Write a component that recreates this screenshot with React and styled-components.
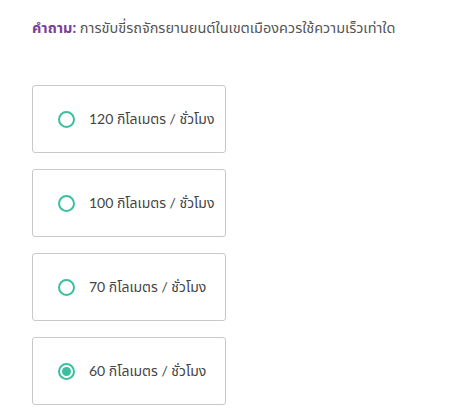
import React, { useState } from "react";
import styled, { createGlobalStyle } from "styled-components";

const GlobalStyle = createGlobalStyle`
  body {
    margin: 0;
    background: #ffffff;
    font-family: "Lato", "Noto Sans Thai", "Noto Sans", sans-serif;
  }
`;

const Page = styled.div`
  padding: 16px 32px 0;
`;

const Question = styled.p`
  margin: 0 0 45px;
  font-size: 14.5px;
  line-height: 24px;
  color: #555;
`;

const Label = styled.span`
  color: #7b3e98;
  font-weight: 700;
`;

const Options = styled.div`
  display: flex;
  flex-direction: column;
  gap: 16px;
`;

const Option = styled.label`
  display: flex;
  align-items: center;
  gap: 14px;
  box-sizing: border-box;
  width: 194px;
  height: 68px;
  padding-left: 25px;
  border: 1px solid #c9c9c9;
  border-radius: 3px;
  cursor: pointer;
  font-size: 14px;
  color: #444;
`;

const Radio = styled.span`
  box-sizing: border-box;
  width: 17px;
  height: 17px;
  border-radius: 50%;
  border: 2px solid #3cbfa0;
  display: flex;
  align-items: center;
  justify-content: center;

  &::after {
    content: "";
    width: 9px;
    height: 9px;
    border-radius: 50%;
    background: ${(p) => (p.checked ? "#3cbfa0" : "transparent")};
  }
`;

const choices = [
  "120 กิโลเมตร / ชั่วโมง",
  "100 กิโลเมตร / ชั่วโมง",
  "70 กิโลเมตร / ชั่วโมง",
  "60 กิโลเมตร / ชั่วโมง",
];

export default function App() {
  const [selected, setSelected] = useState(3);

  return (
    <Page>
      <GlobalStyle />
      <Question>
        <Label>คำถาม:</Label> การขับขี่รถจักรยานยนต์ในเขตเมืองควรใช้ความเร็วเท่าใด
      </Question>
      <Options>
        {choices.map((c, i) => (
          <Option key={i} onClick={() => setSelected(i)}>
            <Radio checked={selected === i} />
            {c}
          </Option>
        ))}
      </Options>
    </Page>
  );
}
